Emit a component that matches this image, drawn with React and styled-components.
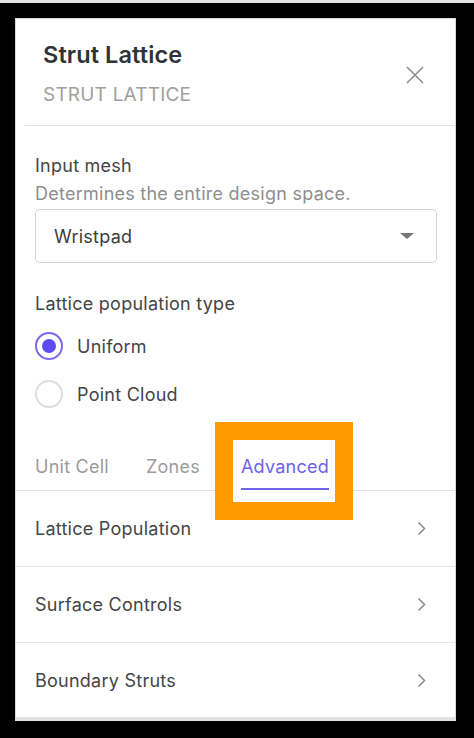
import React from 'react';
import styled, { createGlobalStyle } from 'styled-components';

const GlobalStyle = createGlobalStyle`
  html, body {
    margin: 0;
    padding: 0;
    background: #000;
  }
  body {
    font-family: Inter, "Noto Sans", "Liberation Sans", sans-serif;
    -webkit-font-smoothing: antialiased;
  }
  * { box-sizing: border-box; }
`;

const TopStrip = styled.div`
  height: 3px;
  background: #e4e4e4;
`;

const Card = styled.div`
  margin: 15px 0 0 15px;
  width: 441px;
  background: #fff;
  border: 1px solid #dadada;
  border-bottom: 4px solid #e2e2e2;
`;

////////// header //////////
const Header = styled.div`
  display: flex;
  align-items: center;
  justify-content: space-between;
  padding: 24px 31px 19px 27px;
`;

const Title = styled.div`
  font-size: 23.5px;
  line-height: 24px;
  font-weight: 600;
  color: #2e3339;
  letter-spacing: 0.1px;
`;

const SubTitle = styled.div`
  margin-top: 17px;
  font-size: 19px;
  line-height: 22px;
  color: #a0a0a0;
  letter-spacing: 0.2px;
`;

const Divider = styled.div`
  height: 1px;
  background: #e3e3e3;
  margin-left: ${p => p.$inset || 0}px;
`;

////////// form //////////
const Body = styled.div`
  padding: 26px 18px 0 19px;
  font-size: 18px;
  letter-spacing: 0.25px;
`;

const Label = styled.div`
  line-height: 28px;
  color: #454545;
  margin-top: ${p => p.$top || 0}px;
`;

const Hint = styled.div`
  line-height: 28px;
  color: #8e8e8e;
`;

const Select = styled.div`
  margin-top: 1px;
  height: 54px;
  border: 1px solid #d2d2d2;
  border-radius: 5px;
  display: flex;
  align-items: center;
  justify-content: space-between;
  padding: 0 22px 0 18px;
  color: #3c3c3c;
`;

const Caret = styled.span`
  width: 0;
  height: 0;
  border-left: 7px solid transparent;
  border-right: 7px solid transparent;
  border-top: 6px solid #777;
`;

const RadioGroup = styled.div`
  margin-top: 4px;
`;

const RadioRow = styled.div`
  height: 48px;
  display: flex;
  align-items: center;
  gap: 14px;
  color: #444;
`;

const RadioCircle = styled.span`
  width: 28px;
  height: 28px;
  border-radius: 50%;
  border: 2px solid ${p => (p.$checked ? '#7a68f2' : '#dddddd')};
  display: flex;
  align-items: center;
  justify-content: center;
  &::after {
    content: '';
    width: 14px;
    height: 14px;
    border-radius: 50%;
    background: ${p => (p.$checked ? '#5b4cf4' : 'transparent')};
  }
`;

////////// tabs //////////
const TabBar = styled.div`
  display: flex;
  gap: 37px;
  padding: 0 19px;
  margin-top: 37px;
  border-bottom: 1px solid #e3e3e3;
  font-size: 18px;
  letter-spacing: 0.25px;
`;

const Tab = styled.div`
  position: relative;
  line-height: 24px;
  padding-bottom: 11px;
  margin-left: ${p => (p.$active ? 4 : 0)}px;
  color: ${p => (p.$active ? '#6f60ee' : '#9b9b9b')};
`;

const TabText = styled.span`
  position: relative;
  z-index: 1;
`;

// the orange annotation frame over the active tab
const Highlight = styled.span`
  position: absolute;
  left: -26px;
  right: -24px;
  top: -33px;
  bottom: -30px;
  border: 18px solid #ff9a00;
  background: #fff;
  z-index: 0;
`;

const TabUnderline = styled.span`
  position: absolute;
  left: 0;
  right: 0;
  bottom: 0;
  height: 2px;
  background: #6f60ee;
  z-index: 1;
`;

////////// list //////////
const Row = styled.div`
  height: ${p => (p.$last ? 74 : 76)}px;
  display: flex;
  align-items: center;
  justify-content: space-between;
  padding: 0 29px 0 19px;
  font-size: 18px;
  letter-spacing: 0.25px;
  color: #454545;
  border-bottom: ${p => (p.$last ? 'none' : '1px solid #e6e6e6')};
`;

const CloseIcon = () => (
  <svg width="18" height="18" viewBox="0 0 18 18" fill="none" stroke="#8d8d8d" strokeWidth="1.6">
    <path d="M1 1L17 17M17 1L1 17" />
  </svg>
);

const Chevron = () => (
  <svg width="9" height="15" viewBox="0 0 9 15" fill="none" stroke="#8a8a8a" strokeWidth="1.5">
    <path d="M1.5 1.5L7.5 7.5L1.5 13.5" />
  </svg>
);

const radios = [
  { label: 'Uniform', checked: true },
  { label: 'Point Cloud', checked: false },
];

const tabs = [
  { label: 'Unit Cell', active: false },
  { label: 'Zones', active: false },
  { label: 'Advanced', active: true },
];

const rows = ['Lattice Population', 'Surface Controls', 'Boundary Struts'];

export default function App() {
  return (
    <>
      <GlobalStyle />
      <TopStrip />
      <Card>
        <Header>
          <div>
            <Title>Strut Lattice</Title>
            <SubTitle>STRUT LATTICE</SubTitle>
          </div>
          <CloseIcon />
        </Header>
        <Divider $inset={9} />

        <Body>
          <Label>Input mesh</Label>
          <Hint>Determines the entire design space.</Hint>
          <Select>
            Wristpad
            <Caret />
          </Select>

          <Label $top={27}>Lattice population type</Label>
          <RadioGroup>
            {radios.map(r => (
              <RadioRow key={r.label}>
                <RadioCircle $checked={r.checked} />
                {r.label}
              </RadioRow>
            ))}
          </RadioGroup>
        </Body>

        <TabBar>
          {tabs.map(t => (
            <Tab key={t.label} $active={t.active}>
              {t.active && <Highlight />}
              <TabText>{t.label}</TabText>
              {t.active && <TabUnderline />}
            </Tab>
          ))}
        </TabBar>

        {rows.map((r, i) => (
          <Row key={r} $last={i === rows.length - 1}>
            {r}
            <Chevron />
          </Row>
        ))}
      </Card>
    </>
  );
}
